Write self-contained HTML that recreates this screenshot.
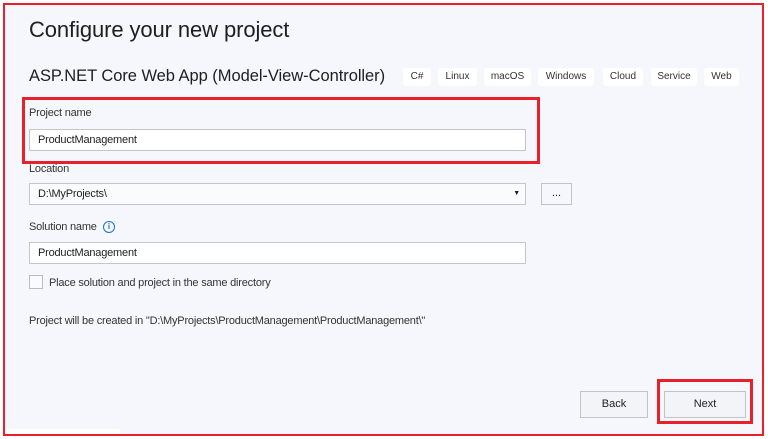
<!DOCTYPE html>
<html><head><style>
*{margin:0;padding:0;box-sizing:border-box}
body{width:768px;height:439px;background:#fff;position:relative;overflow:hidden;font-family:"Segoe UI","Liberation Sans",sans-serif;color:#1e1e1e}
.bg{position:absolute;left:3px;top:3px;width:761px;height:433px;background:#f5f7fc;border:2px solid #e8202a}
.a{position:absolute;white-space:nowrap}
.tag{position:absolute;top:68px;height:18px;background:#fff;border-radius:3px;font-size:10px;line-height:18px;text-align:center;color:#333}
.inp{position:absolute;left:29px;width:497px;height:22px;background:#fff;border:1px solid #c4c6cc;font-size:11px;line-height:20px;padding-left:8px;letter-spacing:-0.2px}
.lbl{font-size:11px;color:#333;letter-spacing:-0.2px}
.btn{position:absolute;top:391px;height:27px;background:#f3f4f7;border:1px solid #c0c3ca;font-size:11px;line-height:25px;text-align:center}
.red{position:absolute;border:3px solid #e8202a}
</style></head><body>
<div class="bg"></div>
<div class="a" style="left:29px;top:17px;font-size:22px;color:#1e1e1e;letter-spacing:-0.1px">Configure your new project</div>
<div class="a" style="left:29px;top:67px;font-size:16.5px;letter-spacing:-0.05px">ASP.NET Core Web App (Model-View-Controller)</div>
<div class="tag" style="left:403px;width:28px">C#</div>
<div class="tag" style="left:438px;width:39px">Linux</div>
<div class="tag" style="left:484px;width:47px">macOS</div>
<div class="tag" style="left:538px;width:56px">Windows</div>
<div class="tag" style="left:603px;width:40px">Cloud</div>
<div class="tag" style="left:651px;width:46px">Service</div>
<div class="tag" style="left:704px;width:35px">Web</div>
<div class="red" style="left:22px;top:97px;width:518px;height:67px"></div>
<div class="a lbl" style="left:29px;top:107px">Project name</div>
<div class="inp" style="top:129px">ProductManagement</div>
<div class="a lbl" style="left:29px;top:163px">Location</div>
<div class="inp" style="top:183px;background:#fafbfd">D:\MyProjects\<span style="position:absolute;right:5px;top:0;font-size:7px">▼</span></div>
<div class="btn" style="left:541px;top:183px;width:31px;height:22px;line-height:18px;background:#f5f7fc">...</div>
<div class="a lbl" style="left:29px;top:221px">Solution name</div>
<div class="a" style="left:103px;top:221px;width:12px;height:12px;border:1.5px solid #1a73c8;border-radius:50%;color:#1a73c8;font-size:8px;font-weight:bold;line-height:9px;text-align:center">i</div>
<div class="inp" style="top:242px">ProductManagement</div>
<div class="a" style="left:29px;top:275px;width:14px;height:14px;border:1px solid #b8bbc2;background:#fafbfd"></div>
<div class="a lbl" style="left:49px;top:277px">Place solution and project in the same directory</div>
<div class="a lbl" style="left:29px;top:315px">Project will be created in "D:\MyProjects\ProductManagement\ProductManagement\"</div>
<div class="btn" style="left:580px;width:68px">Back</div>
<div class="btn" style="left:664px;width:82px">Next</div>
<div class="red" style="left:657px;top:379px;width:96px;height:45px"></div>
<div class="a" style="left:5px;top:429px;width:115px;height:5px;background:#fff"></div>
</body></html>
